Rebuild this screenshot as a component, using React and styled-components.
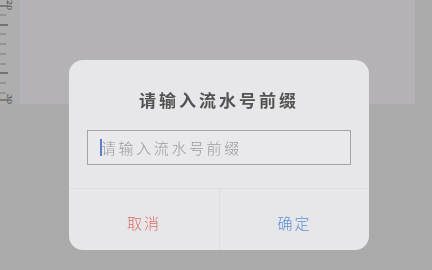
import React from 'react';
import styled, { createGlobalStyle } from 'styled-components';

const GlobalStyle = createGlobalStyle`
  html, body {
    margin: 0;
    padding: 0;
    width: 432px;
    height: 270px;
    overflow: hidden;
    background: #aaaaaa;
    font-family: "Noto Sans CJK SC", "Liberation Sans", sans-serif;
  }
`;

const Page = styled.div`
  display: flex;
  width: 432px;
  height: 270px;
  background: #aaaaaa;
`;

const Ruler = styled.div`
  width: 20px;
  height: 104px;
  background: #aeaeae;
  position: relative;
`;

const RulerLabel = styled.span`
  position: absolute;
  left: 4px;
  top: ${({ $top }) => $top}px;
  font-family: "DejaVu Serif", serif;
  font-size: 8px;
  line-height: 8px;
  color: #3c3c3c;
  transform: rotate(90deg);
`;

const TopPanel = styled.div`
  width: 395px;
  height: 104px;
  background: #b4b2b6;
`;

const Overlay = styled.div`
  position: fixed;
  inset: 0;
  display: flex;
  align-items: flex-start;
  padding: 60px 0 0 69px;
`;

const Dialog = styled.div`
  width: 300px;
  height: 190px;
  background: #e7e7e9;
  border-radius: 14px;
  display: flex;
  flex-direction: column;
  overflow: hidden;
`;

const Title = styled.div`
  padding-top: 27px;
  height: 26px;
  text-align: center;
  font-size: 17px;
  line-height: 26px;
  font-weight: 700;
  letter-spacing: 3px;
  color: #535353;
`;

const InputBox = styled.div`
  margin: 17px 18px 0 18px;
  height: 33px;
  border: 1px solid #a4a4a6;
  background: #e9e9eb;
  display: flex;
  align-items: center;
  padding-left: 12px;
`;

const Caret = styled.span`
  width: 2px;
  height: 17px;
  background: #5b7fc9;
  margin-right: -1px;
`;

const Placeholder = styled.span`
  font-size: 15px;
  letter-spacing: 2.6px;
  color: #9a9a9c;
  font-weight: 300;
`;

const Footer = styled.div`
  margin-top: auto;
  height: 61px;
  border-top: 1px solid #dedee0;
  display: grid;
  grid-template-columns: 1fr 1fr;
`;

const Action = styled.button`
  border: none;
  background: transparent;
  font-family: inherit;
  font-size: 15px;
  letter-spacing: 2px;
  font-weight: 300;
  color: ${({ $tone }) => ($tone === 'danger' ? '#dd6a6a' : '#5a8fd6')};
  border-left: ${({ $divider }) => ($divider ? '1px solid #dedee0' : 'none')};
  padding: 5px 0 0 0;
  display: flex;
  align-items: center;
  justify-content: center;
`;

const ticks = [15, 25, 34, 44, 54, 64, 73, 83, 93];

const RulerTicks = () => (
  <svg width="20" height="104" style={{ position: 'absolute', left: 0, top: 0 }}>
    {ticks.map((y, i) => (
      <line
        key={y}
        x1="0"
        x2={i % 5 === 1 ? 8 : 6}
        y1={y}
        y2={y}
        stroke={i % 5 === 1 ? '#3a3a3a' : '#7a7a7a'}
        strokeWidth="1"
      />
    ))}
    <line x1="0" x2="8" y1="6" y2="6" stroke="#4a4a4a" strokeWidth="1" />
    <line x1="0" x2="8" y1="100" y2="100" stroke="#4a4a4a" strokeWidth="1" />
  </svg>
);

export default function App() {
  return (
    <>
      <GlobalStyle />
      <Page>
        <Ruler>
          <RulerTicks />
          <RulerLabel $top={1}>20</RulerLabel>
          <RulerLabel $top={95}>30</RulerLabel>
        </Ruler>
        <TopPanel />
      </Page>
      <Overlay>
        <Dialog>
          <Title>请输入流水号前缀</Title>
          <InputBox>
            <Caret />
            <Placeholder>请输入流水号前缀</Placeholder>
          </InputBox>
          <Footer>
            <Action $tone="danger">取消</Action>
            <Action $tone="primary" $divider>
              确定
            </Action>
          </Footer>
        </Dialog>
      </Overlay>
    </>
  );
}
